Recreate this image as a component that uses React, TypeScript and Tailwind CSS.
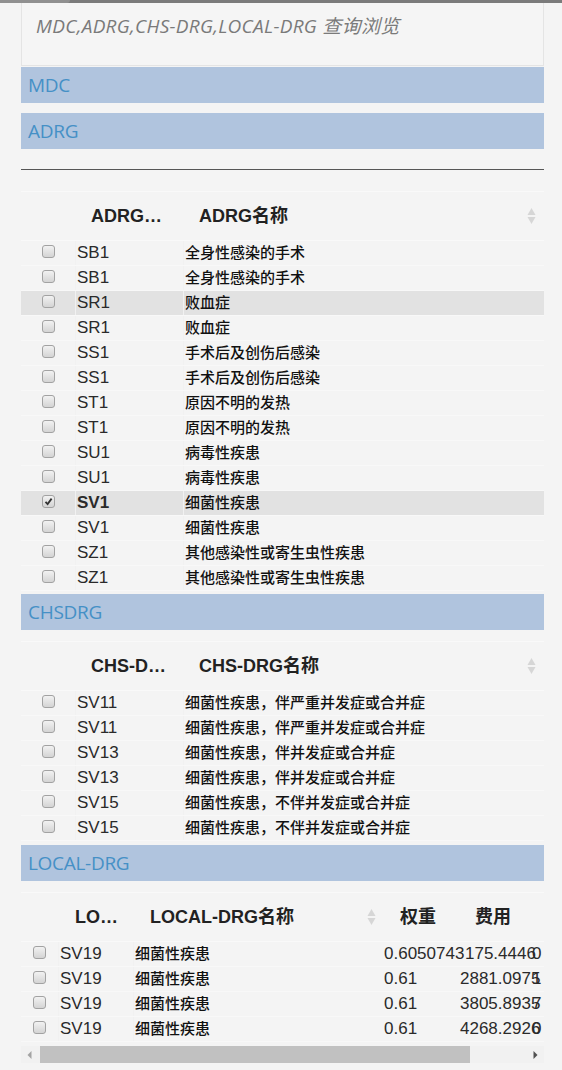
import React from "react"

const SANS = "font-['Liberation_Sans','Noto_Sans_CJK_SC',sans-serif]"
const UI = "font-['Open_Sans','Noto_Sans_CJK_SC',sans-serif]"

type Row = { code: string; name: string; active?: boolean; checked?: boolean }

const adrgRows: Row[] = [
  { code: "SB1", name: "全身性感染的手术" },
  { code: "SB1", name: "全身性感染的手术" },
  { code: "SR1", name: "败血症", active: true },
  { code: "SR1", name: "败血症" },
  { code: "SS1", name: "手术后及创伤后感染" },
  { code: "SS1", name: "手术后及创伤后感染" },
  { code: "ST1", name: "原因不明的发热" },
  { code: "ST1", name: "原因不明的发热" },
  { code: "SU1", name: "病毒性疾患" },
  { code: "SU1", name: "病毒性疾患" },
  { code: "SV1", name: "细菌性疾患", active: true, checked: true },
  { code: "SV1", name: "细菌性疾患" },
  { code: "SZ1", name: "其他感染性或寄生虫性疾患" },
  { code: "SZ1", name: "其他感染性或寄生虫性疾患" },
]

const chsRows: Row[] = [
  { code: "SV11", name: "细菌性疾患，伴严重并发症或合并症" },
  { code: "SV11", name: "细菌性疾患，伴严重并发症或合并症" },
  { code: "SV13", name: "细菌性疾患，伴并发症或合并症" },
  { code: "SV13", name: "细菌性疾患，伴并发症或合并症" },
  { code: "SV15", name: "细菌性疾患，不伴并发症或合并症" },
  { code: "SV15", name: "细菌性疾患，不伴并发症或合并症" },
]

// the first weight is long and runs into the cost column
const localRows = [
  { code: "SV19", name: "细菌性疾患", weight: "0.6050743", cost: "175.4446", extra: "0", shift: true },
  { code: "SV19", name: "细菌性疾患", weight: "0.61", cost: "2881.0975", extra: "1" },
  { code: "SV19", name: "细菌性疾患", weight: "0.61", cost: "3805.8935", extra: "7" },
  { code: "SV19", name: "细菌性疾患", weight: "0.61", cost: "4268.2926", extra: "0" },
]

function Checkbox({ checked }: { checked?: boolean }) {
  return (
    <div className="w-[13px] h-[13px] mb-[4px] rounded-[3px] border border-[#a2a2a2] bg-gradient-to-b from-[#f2f2f2] to-[#d4d4d4] flex items-center justify-center">
      {checked && (
        <svg width="9" height="9" viewBox="0 0 9 9">
          <path d="M1.5 4.8 L3.6 7 L7.6 1.6" fill="none" stroke="#333" strokeWidth="1.8" />
        </svg>
      )}
    </div>
  )
}

function SortIcon() {
  return (
    <svg width="9" height="18" viewBox="0 0 9 18">
      <path d="M4.5 1 L8.5 8 L0.5 8 Z" fill="#d6d6d6" />
      <path d="M0.5 10 L8.5 10 L4.5 17 Z" fill="#d6d6d6" />
    </svg>
  )
}

function SectionBar({ title, className = "" }: { title: string; className?: string }) {
  return (
    <div className={`h-[36px] bg-[#b0c4de] flex items-center pl-[7px] ${className}`}>
      <span className={`${UI} text-[19px] tracking-[-0.3px] text-[#4590c6]`}>{title}</span>
    </div>
  )
}

function DrgTable({ codeHead, nameHead, rows, className = "" }: { codeHead: string; nameHead: string; rows: Row[]; className?: string }) {
  return (
    <div className={`${SANS} ${className}`}>
      <div className="h-[50px] flex items-center border-t border-b border-[#f9f9f9]">
        <div className="w-[54px]" />
        <div className="w-[108px] pl-4 text-[18px] font-bold text-[#222]">{codeHead}</div>
        <div className="flex-1 pl-4 pr-[8px] flex items-center justify-between text-[18px] font-bold text-[#222]">
          <span>{nameHead}</span>
          <SortIcon />
        </div>
      </div>
      {rows.map((r, i) => (
        <div key={i} className={`h-[25px] flex items-stretch border-b border-[#f8f8f8] ${r.active ? "bg-[#e2e2e2]" : ""}`}>
          <div className="w-[54px] flex items-center justify-center">
            <Checkbox checked={r.checked} />
          </div>
          <div className={`w-[108px] pl-[1px] flex items-center border-l border-[#f1f1f1] text-[17px] text-[#2a2a2a] ${r.checked ? "font-bold" : ""}`}>
            {r.code}
          </div>
          <div className="flex-1 pl-[1px] flex items-center border-l border-[#f1f1f1] text-[15px] font-medium text-[#111]">
            {r.name}
          </div>
        </div>
      ))}
    </div>
  )
}

function LocalTable() {
  return (
    <div className={`${SANS} mt-[11px]`}>
      <div className="overflow-hidden">
        <div className="w-[760px]">
          <div className="h-[50px] flex items-center border-t border-b border-[#f9f9f9] text-[18px] font-bold text-[#222]">
            <div className="w-[37px]" />
            <div className="w-[75px] pl-[17px]">LO…</div>
            <div className="w-[250px] pl-[17px] pr-[7px] flex items-center justify-between">
              <span>LOCAL-DRG名称</span>
              <SortIcon />
            </div>
            <div className="w-[76px] pl-[17px]">权重</div>
            <div className="w-[72px] pl-[16px]">费用</div>
            <div className="w-[100px]" />
          </div>
          {localRows.map((r, i) => (
            <div key={i} className="h-[25px] flex items-stretch border-b border-[#f8f8f8] text-[#2a2a2a]">
              <div className="w-[37px] flex items-center justify-center">
                <Checkbox />
              </div>
              <div className="w-[75px] pl-[1px] flex items-center text-[17px] border-l border-[#f1f1f1]">{r.code}</div>
              <div className="w-[250px] pl-[1px] flex items-center text-[15px] font-medium text-[#111] border-l border-[#f1f1f1]">{r.name}</div>
              <div className="w-[76px] pl-[1px] flex items-center text-[17px] whitespace-nowrap">{r.weight}</div>
              <div className={`w-[72px] flex items-center text-[17px] whitespace-nowrap ${r.shift ? "pl-[6px]" : "pl-[1px]"}`}>{r.cost}</div>
              <div className="w-[100px] pl-[1px] flex items-center text-[17px]">{r.extra}</div>
            </div>
          ))}
        </div>
      </div>
      <div className="mt-[4px] h-[17px] flex items-center bg-[#f1f1f1]">
        <div className="w-[17px] h-full flex items-center justify-center">
          <svg width="5" height="8" viewBox="0 0 5 8">
            <path d="M4.5 0 L0.5 4 L4.5 8 Z" fill="#a3a3a3" />
          </svg>
        </div>
        <div className="flex-1 h-full flex items-center pl-[2px]">
          <div className="w-[430px] h-[17px] bg-[#c1c1c1]" />
        </div>
        <div className="w-[17px] h-full flex items-center justify-center">
          <svg width="5" height="8" viewBox="0 0 5 8">
            <path d="M0.5 0 L4.5 4 L0.5 8 Z" fill="#505050" />
          </svg>
        </div>
      </div>
    </div>
  )
}

export default function App() {
  return (
    <div className="min-h-[1070px] bg-[#f4f4f4]">
      <div className="h-[3px] bg-[#7b7b7b]">
        <div className="w-[70px] h-full bg-[#909090] rounded-br-[3px]" />
      </div>
      <div className="ml-[21px] w-[523px]">
        <div className="h-[63px] border border-t-0 border-[#e4e4e4] bg-[#f5f5f5] pt-[9px] pl-[14px]">
          <span className={`${UI} italic text-[19px] tracking-[0.3px] text-[#7a7a7a]`}>
            MDC,ADRG,CHS-DRG,LOCAL-DRG 查询浏览
          </span>
        </div>
        <SectionBar title="MDC" className="mt-[1px]" />
        <SectionBar title="ADRG" className="mt-[10px]" />
        <div className="mt-[20px] h-px bg-[#555]" />
        <DrgTable codeHead="ADRG…" nameHead="ADRG名称" rows={adrgRows} className="mt-[21px]" />
        <SectionBar title="CHSDRG" className="mt-[3px]" />
        <DrgTable codeHead="CHS-D…" nameHead="CHS-DRG名称" rows={chsRows} className="mt-[11px]" />
        <SectionBar title="LOCAL-DRG" className="mt-[4px]" />
        <LocalTable />
      </div>
    </div>
  )
}
